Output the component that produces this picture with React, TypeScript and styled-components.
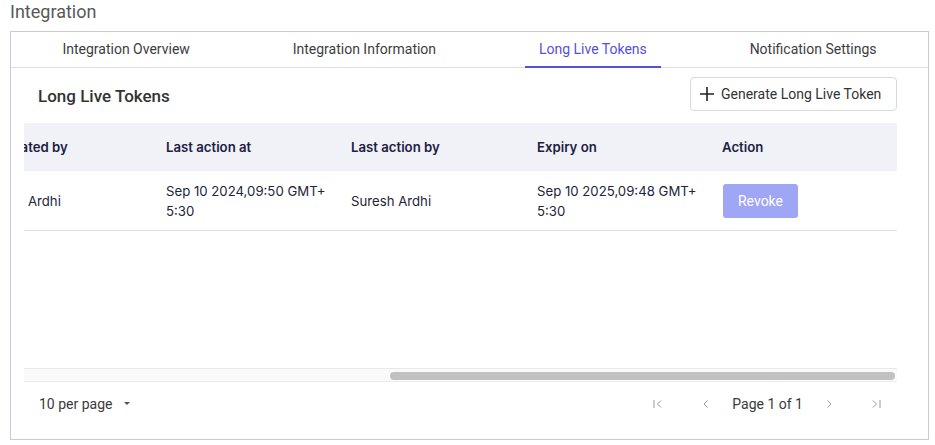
import React, { useEffect, useRef, useState } from "react";
import styled, { createGlobalStyle } from "styled-components";

const GlobalStyle = createGlobalStyle`
    html, body {
        margin: 0;
        padding: 0;
        background: #ffffff;
    }
    body {
        font-family: Roboto, "Liberation Sans", sans-serif;
        color: #333;
    }
`;

const tabs = [
    "Integration Overview",
    "Integration Information",
    "Long Live Tokens",
    "Notification Settings",
];

const columns = [
    { title: "Token name", width: 200 },
    { title: "Description", width: 200 },
    { title: "Created at", width: 190 },
    { title: "Created by", width: 168 },
    { title: "Last action at", width: 185 },
    { title: "Last action by", width: 186 },
    { title: "Expiry on", width: 185 },
    { title: "Action", width: 186 },
];

const row = [
    "integration-token",
    "Token for sync",
    "Sep 10 2024,09:48 GMT+5:30",
    "Ravi Ardhi",
    "Sep 10 2024,09:50 GMT+5:30",
    "Suresh Ardhi",
    "Sep 10 2025,09:48 GMT+5:30",
];

const ChevronFirst = () => (
    <svg width="9" height="10" viewBox="0 0 9 10" fill="none">
        <path d="M1 1v8" stroke="currentColor" strokeWidth="1" />
        <path d="M8 1.5L4.5 5L8 8.5" stroke="currentColor" strokeWidth="1" />
    </svg>
);

const ChevronLast = () => (
    <svg width="9" height="10" viewBox="0 0 9 10" fill="none">
        <path d="M8 1v8" stroke="currentColor" strokeWidth="1" />
        <path d="M1 1.5L4.5 5L1 8.5" stroke="currentColor" strokeWidth="1" />
    </svg>
);

const ChevronLeft = () => (
    <svg width="5" height="10" viewBox="0 0 5 10" fill="none">
        <path d="M4.5 1.5L1 5L4.5 8.5" stroke="currentColor" strokeWidth="1" />
    </svg>
);

const ChevronRight = () => (
    <svg width="5" height="10" viewBox="0 0 5 10" fill="none">
        <path d="M0.5 1.5L4 5L0.5 8.5" stroke="currentColor" strokeWidth="1" />
    </svg>
);

const PlusIcon = () => (
    <svg width="16" height="16" viewBox="0 0 16 16" fill="none">
        <path d="M8 1v14M1 8h14" stroke="#222" strokeWidth="1.6" />
    </svg>
);

const App: React.FC = () => {
    const scrollRef = useRef<HTMLDivElement>(null);
    const [thumb, setThumb] = useState({ left: 0, width: 0 });

    useEffect(() => {
        const el = scrollRef.current;
        if (!el) return;
        el.scrollLeft = el.scrollWidth;
        const ratio = el.clientWidth / el.scrollWidth;
        setThumb({
            left: (el.scrollLeft / el.scrollWidth) * 100,
            width: ratio * 100,
        });
    }, []);

    return (
        <Page>
            <GlobalStyle />
            <Title>Integration</Title>
            <Panel>
                <TabBar>
                    {tabs.map((t) => (
                        <Tab key={t} $active={t === "Long Live Tokens"}>
                            {t}
                        </Tab>
                    ))}
                </TabBar>
                <Content>
                    <SectionHeader>
                        <Heading>Long Live Tokens</Heading>
                        <GenerateButton>
                            <PlusIcon />
                            Generate Long Live Token
                        </GenerateButton>
                    </SectionHeader>
                    <TableScroll ref={scrollRef}>
                        <Table>
                            <colgroup>
                                {columns.map((c) => (
                                    <col key={c.title} style={{ width: c.width }} />
                                ))}
                            </colgroup>
                            <thead>
                                <tr>
                                    {columns.map((c) => (
                                        <Th key={c.title}>{c.title}</Th>
                                    ))}
                                </tr>
                            </thead>
                            <tbody>
                                <tr>
                                    {row.map((cell, i) => (
                                        <Td key={i}>{cell}</Td>
                                    ))}
                                    <Td>
                                        <RevokeButton>Revoke</RevokeButton>
                                    </Td>
                                </tr>
                            </tbody>
                        </Table>
                    </TableScroll>
                    <ScrollTrack>
                        <ScrollThumb
                            style={{
                                left: `${thumb.left}%`,
                                width: `calc(${thumb.width}% - 3px)`,
                            }}
                        />
                    </ScrollTrack>
                    <Footer>
                        <PerPage>
                            10 per page
                            <Caret />
                        </PerPage>
                        <Pager>
                            <PagerIcon $gap={41}>
                                <ChevronFirst />
                            </PagerIcon>
                            <PagerIcon $gap={24}>
                                <ChevronLeft />
                            </PagerIcon>
                            <PageLabel>Page 1 of 1</PageLabel>
                            <PagerIcon $gap={40}>
                                <ChevronRight />
                            </PagerIcon>
                            <PagerIcon $gap={0}>
                                <ChevronLast />
                            </PagerIcon>
                        </Pager>
                    </Footer>
                </Content>
            </Panel>
        </Page>
    );
};

export default App;

const Page = styled.div`
    width: 935px;
    height: 445px;
    box-sizing: border-box;
    padding: 0 6px 5px 10px;
    display: flex;
    flex-direction: column;
`;

const Title = styled.div`
    height: 31px;
    line-height: 24px;
    font-size: 18px;
    color: #585858;
`;

const Panel = styled.div`
    flex: 1;
    border: 1px solid #c9cadc;
    display: flex;
    flex-direction: column;
    min-height: 0;
`;

const TabBar = styled.div`
    height: 35px;
    display: flex;
    justify-content: space-around;
    border-bottom: 1px solid #dcdce4;
`;

const Tab = styled.div<{ $active: boolean }>`
    padding: 0 14px;
    display: flex;
    align-items: center;
    font-size: 14px;
    color: ${(p) => (p.$active ? "#5551db" : "#3d3d3d")};
    border-bottom: 2px solid ${(p) => (p.$active ? "#5551db" : "transparent")};
    margin-bottom: -1px;
`;

const Content = styled.div`
    flex: 1;
    display: flex;
    flex-direction: column;
    padding: 9px 31px 0 13px;
    min-height: 0;
`;

const SectionHeader = styled.div`
    display: flex;
    justify-content: space-between;
    align-items: center;
    height: 34px;
    margin-bottom: 12px;
`;

const Heading = styled.h2`
    margin: 0 0 0 14px;
    font-size: 17px;
    font-weight: 500;
    color: #333;
    padding-top: 4px;
`;

const GenerateButton = styled.button`
    height: 34px;
    width: 207px;
    box-sizing: border-box;
    display: flex;
    align-items: center;
    gap: 6px;
    padding: 0 8px;
    background: #fff;
    border: 1px solid #dadada;
    border-radius: 4px;
    font-family: Roboto, "Liberation Sans", sans-serif;
    font-size: 14px;
    color: #333;
`;

const TableScroll = styled.div`
    height: 245px;
    overflow: hidden;
`;

const ScrollTrack = styled.div`
    position: relative;
    height: 12px;
    background: #fafafa;
    border-top: 1px solid #e8e8e8;
    border-bottom: 1px solid #ececec;
`;

const ScrollThumb = styled.div`
    position: absolute;
    top: 3px;
    height: 8px;
    border-radius: 4px;
    background: #c1c1c1;
    margin-left: 1px;
`;

const Table = styled.table`
    table-layout: fixed;
    border-collapse: collapse;
    width: 1500px;
    font-family: Inter, "Liberation Sans", sans-serif;
    font-size: 13.2px;
`;

const Th = styled.th`
    height: 48px;
    padding: 0 11px;
    text-align: left;
    background: #f1f2f8;
    color: #1c2142;
    font-weight: 600;
`;

const Td = styled.td`
    height: 59px;
    padding: 0 11px;
    text-align: left;
    color: #22253a;
    line-height: 20px;
    border-bottom: 1px solid #dfdfe3;
    word-break: break-all;
`;

const RevokeButton = styled.button`
    width: 75px;
    height: 34px;
    border: none;
    border-radius: 3px;
    background: #a0a6f6;
    color: #fff;
    font-family: Roboto, "Liberation Sans", sans-serif;
    font-size: 14px;
    margin-left: 1px;
`;

const Footer = styled.div`
    flex: 1;
    display: flex;
    justify-content: space-between;
    align-items: center;
    padding: 0 16px 14px 15px;
`;

const PerPage = styled.div`
    display: flex;
    align-items: center;
    gap: 12px;
    font-size: 14px;
    color: #3a3a3a;
`;

const Caret = styled.span`
    width: 0;
    height: 0;
    border-left: 3px solid transparent;
    border-right: 3px solid transparent;
    border-top: 3px solid #555;
`;

const Pager = styled.div`
    display: flex;
    align-items: center;
`;

const PagerIcon = styled.span<{ $gap: number }>`
    display: flex;
    align-items: center;
    color: #9a9a9a;
    margin-right: ${(p) => p.$gap}px;
`;

const PageLabel = styled.span`
    font-size: 14px;
    color: #3a3a3a;
    margin-right: 24px;
`;
